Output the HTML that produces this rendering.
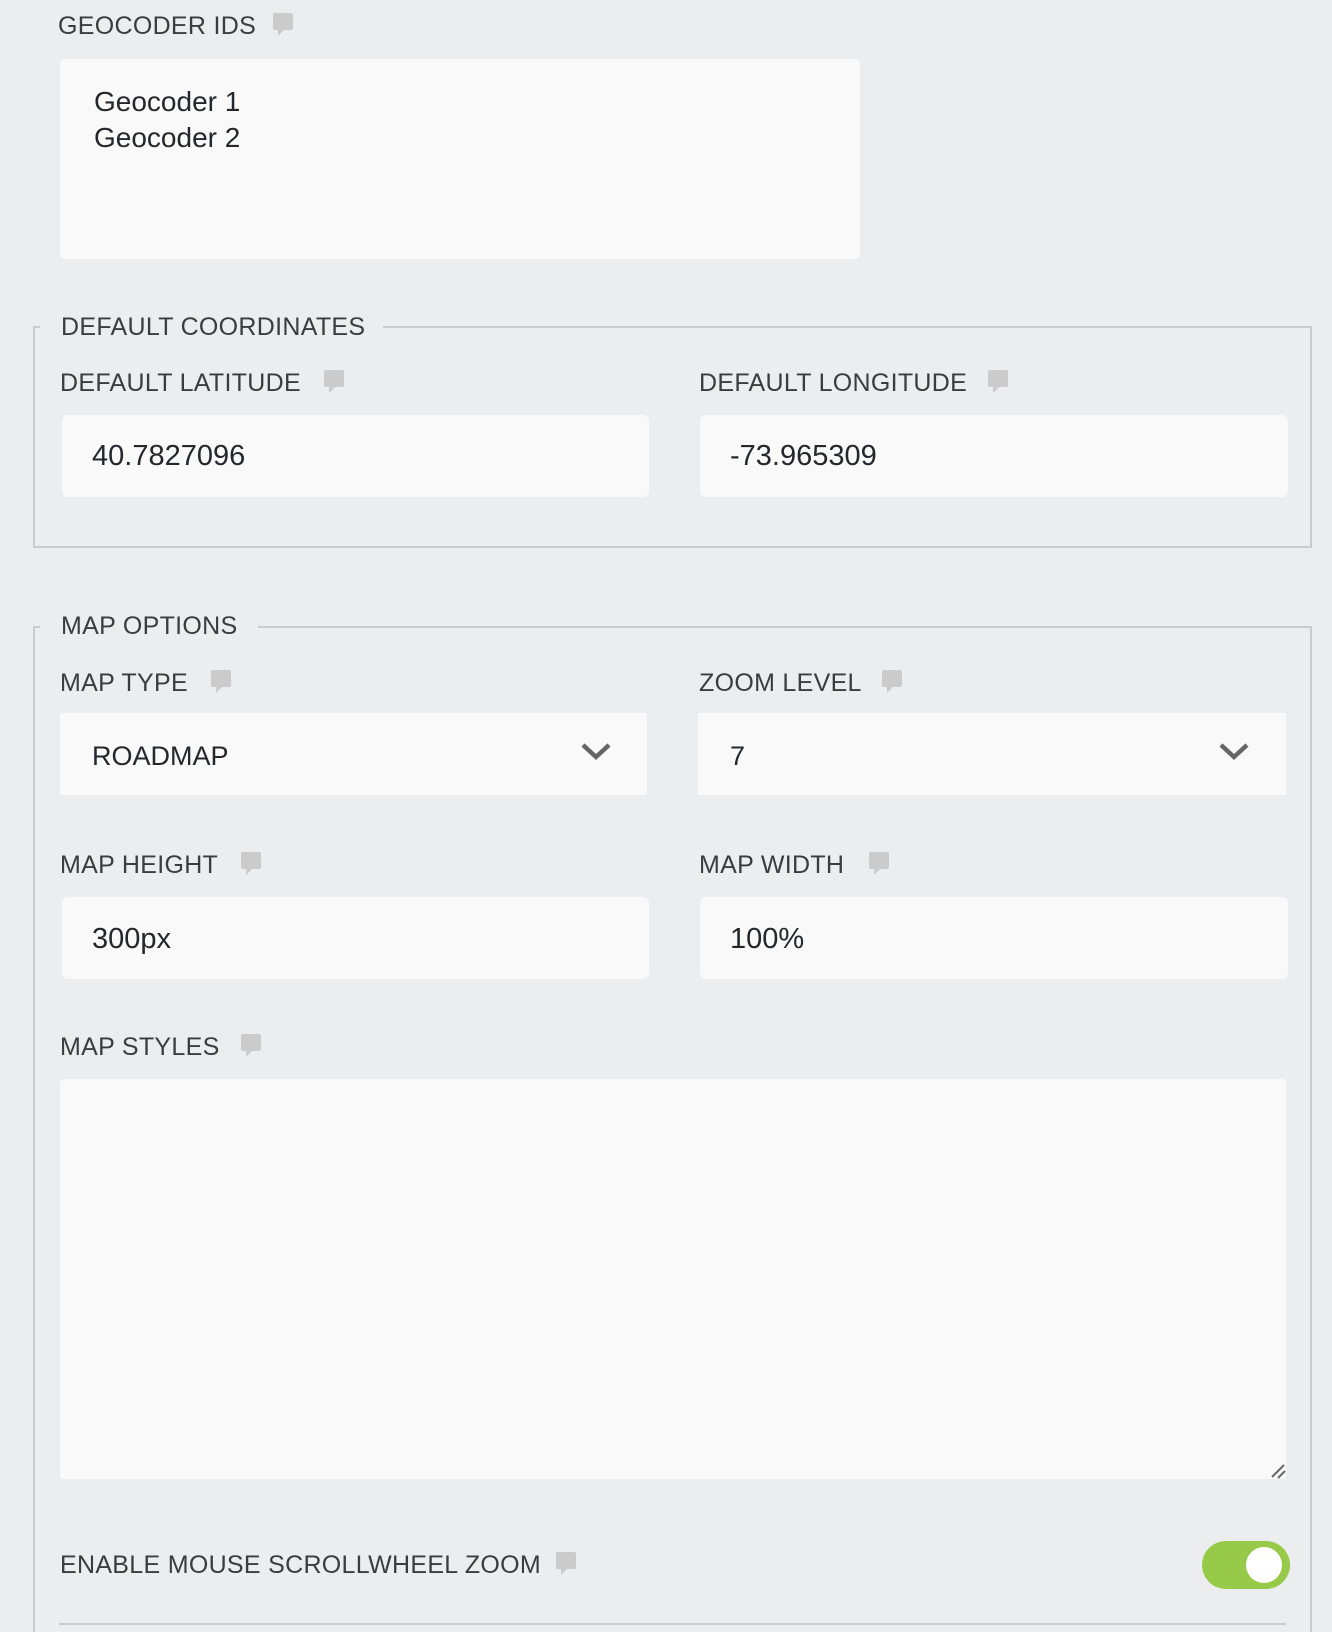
<!DOCTYPE html>
<html><head><meta charset="utf-8"><style>
*{box-sizing:border-box;margin:0;padding:0}
html,body{width:1332px;height:1632px;overflow:hidden;background:#ecedef;font-family:"Liberation Sans",Arial,sans-serif}
#wrap{position:relative;width:1332px;height:1632px;overflow:hidden}
.lbl{position:absolute;font-size:25px;line-height:30px;color:#3c3c3c;white-space:nowrap;letter-spacing:0.3px}
.ic{position:absolute}
.box{position:absolute;background:#f9f9f9}
.inp{position:absolute;background:#f9f9f9;border-radius:6px}
.val{position:absolute;font-size:29px;line-height:34px;color:#23282d;white-space:nowrap}
.fs{position:absolute;border:2px solid #cbcbcb}
.leg{position:absolute;background:#ecedef;height:6px}
.chev{position:absolute}
</style></head><body><div id="wrap">

<div class="lbl" style="left:58px;top:11px">GEOCODER IDS</div>
<svg class="ic" style="left:272px;top:12px" width="22" height="26" viewBox="0 0 22 26"><path d="M3 1h16a2 2 0 0 1 2 2v13a2 2 0 0 1-2 2H12l-6 6v-6H3a2 2 0 0 1-2-2V3a2 2 0 0 1 2-2z" fill="#cbcbcb"/></svg>
<div class="box" style="left:60px;top:59px;width:800px;height:200px;border-radius:4px"></div>
<div class="val" style="left:94px;top:84px;line-height:36px;font-size:28px">Geocoder 1<br>Geocoder 2</div>

<div class="fs" style="left:33px;top:326px;width:1279px;height:222px"></div>
<div class="leg" style="left:40px;top:324px;width:343px"></div>
<div class="lbl" style="left:61px;top:312px">DEFAULT COORDINATES</div>

<div class="lbl" style="left:60px;top:368px">DEFAULT LATITUDE</div>
<svg class="ic" style="left:323px;top:369px" width="22" height="26" viewBox="0 0 22 26"><path d="M3 1h16a2 2 0 0 1 2 2v13a2 2 0 0 1-2 2H12l-6 6v-6H3a2 2 0 0 1-2-2V3a2 2 0 0 1 2-2z" fill="#cbcbcb"/></svg>
<div class="lbl" style="left:699px;top:368px">DEFAULT LONGITUDE</div>
<svg class="ic" style="left:987px;top:369px" width="22" height="26" viewBox="0 0 22 26"><path d="M3 1h16a2 2 0 0 1 2 2v13a2 2 0 0 1-2 2H12l-6 6v-6H3a2 2 0 0 1-2-2V3a2 2 0 0 1 2-2z" fill="#cbcbcb"/></svg>
<div class="inp" style="left:62px;top:415px;width:587px;height:82px"></div>
<div class="inp" style="left:700px;top:415px;width:588px;height:82px"></div>
<div class="val" style="left:92px;top:439px">40.7827096</div>
<div class="val" style="left:730px;top:439px">-73.965309</div>

<div class="fs" style="left:33px;top:626px;width:1279px;height:1020px"></div>
<div class="leg" style="left:40px;top:624px;width:218px"></div>
<div class="lbl" style="left:61px;top:611px">MAP OPTIONS</div>

<div class="lbl" style="left:60px;top:668px">MAP TYPE</div>
<svg class="ic" style="left:210px;top:669px" width="22" height="26" viewBox="0 0 22 26"><path d="M3 1h16a2 2 0 0 1 2 2v13a2 2 0 0 1-2 2H12l-6 6v-6H3a2 2 0 0 1-2-2V3a2 2 0 0 1 2-2z" fill="#cbcbcb"/></svg>
<div class="lbl" style="left:699px;top:668px">ZOOM LEVEL</div>
<svg class="ic" style="left:881px;top:669px" width="22" height="26" viewBox="0 0 22 26"><path d="M3 1h16a2 2 0 0 1 2 2v13a2 2 0 0 1-2 2H12l-6 6v-6H3a2 2 0 0 1-2-2V3a2 2 0 0 1 2-2z" fill="#cbcbcb"/></svg>
<div class="box" style="left:60px;top:713px;width:587px;height:82px"></div>
<div class="box" style="left:698px;top:713px;width:588px;height:82px"></div>
<div class="val" style="left:92px;top:739px;font-size:27px">ROADMAP</div>
<div class="val" style="left:730px;top:739px;font-size:27px">7</div>
<svg class="chev" style="left:580px;top:741px" width="32" height="22" viewBox="0 0 32 22"><path d="M3 4l13 12 13-12" fill="none" stroke="#666" stroke-width="4.5"/></svg>
<svg class="chev" style="left:1218px;top:741px" width="32" height="22" viewBox="0 0 32 22"><path d="M3 4l13 12 13-12" fill="none" stroke="#666" stroke-width="4.5"/></svg>

<div class="lbl" style="left:60px;top:850px">MAP HEIGHT</div>
<svg class="ic" style="left:240px;top:851px" width="22" height="26" viewBox="0 0 22 26"><path d="M3 1h16a2 2 0 0 1 2 2v13a2 2 0 0 1-2 2H12l-6 6v-6H3a2 2 0 0 1-2-2V3a2 2 0 0 1 2-2z" fill="#cbcbcb"/></svg>
<div class="lbl" style="left:699px;top:850px">MAP WIDTH</div>
<svg class="ic" style="left:868px;top:851px" width="22" height="26" viewBox="0 0 22 26"><path d="M3 1h16a2 2 0 0 1 2 2v13a2 2 0 0 1-2 2H12l-6 6v-6H3a2 2 0 0 1-2-2V3a2 2 0 0 1 2-2z" fill="#cbcbcb"/></svg>
<div class="inp" style="left:62px;top:897px;width:587px;height:82px"></div>
<div class="inp" style="left:700px;top:897px;width:588px;height:82px"></div>
<div class="val" style="left:92px;top:922px">300px</div>
<div class="val" style="left:730px;top:922px">100%</div>

<div class="lbl" style="left:60px;top:1032px">MAP STYLES</div>
<svg class="ic" style="left:240px;top:1033px" width="22" height="26" viewBox="0 0 22 26"><path d="M3 1h16a2 2 0 0 1 2 2v13a2 2 0 0 1-2 2H12l-6 6v-6H3a2 2 0 0 1-2-2V3a2 2 0 0 1 2-2z" fill="#cbcbcb"/></svg>
<div class="box" style="left:60px;top:1079px;width:1226px;height:400px;border-radius:4px"></div>
<svg style="position:absolute;left:1270px;top:1463px" width="16" height="16" viewBox="0 0 16 16"><path d="M2 14L14 2M8 15L15 8" stroke="#666" stroke-width="2"/></svg>

<div class="lbl" style="left:60px;top:1550px">ENABLE MOUSE SCROLLWHEEL ZOOM</div>
<svg class="ic" style="left:555px;top:1551px" width="22" height="26" viewBox="0 0 22 26"><path d="M3 1h16a2 2 0 0 1 2 2v13a2 2 0 0 1-2 2H12l-6 6v-6H3a2 2 0 0 1-2-2V3a2 2 0 0 1 2-2z" fill="#cbcbcb"/></svg>
<div style="position:absolute;left:1202px;top:1541px;width:88px;height:48px;border-radius:24px;background:#97ca48"></div>
<div style="position:absolute;left:1246px;top:1547px;width:36px;height:36px;border-radius:50%;background:#fff"></div>
<div style="position:absolute;left:59px;top:1623px;width:1227px;height:2px;background:#cbcbcb"></div>
</div></body></html>
